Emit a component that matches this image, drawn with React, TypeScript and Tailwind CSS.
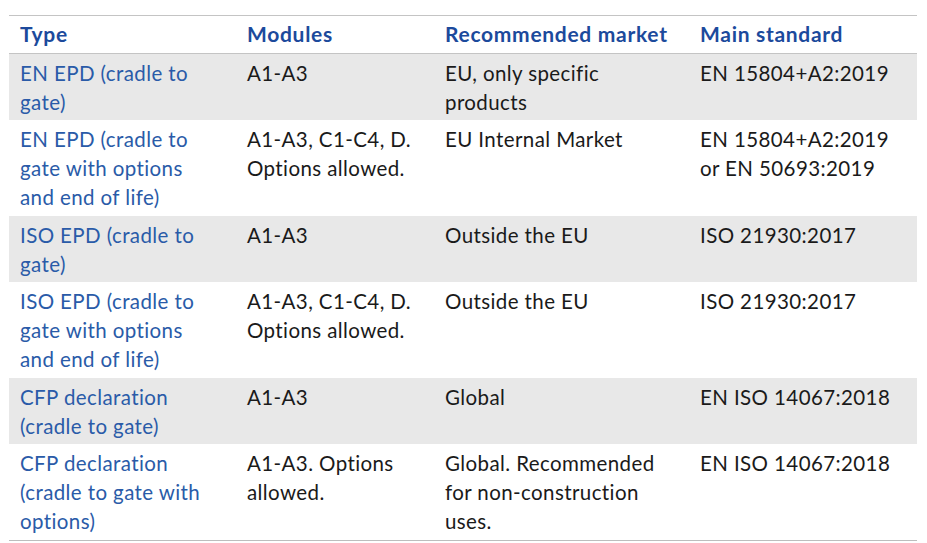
import React from "react";

type Row = { t: string[]; m: string[]; r: string[]; s: string[]; gray: boolean; h: string };

const rows: Row[] = [
  { t: ["EN EPD (cradle to", "gate)"], m: ["A1-A3"], r: ["EU, only specific", "products"], s: ["EN 15804+A2:2019"], gray: true, h: "h-[66px]" },
  { t: ["EN EPD (cradle to", "gate with options", "and end of life)"], m: ["A1-A3, C1-C4, D.", "Options allowed."], r: ["EU Internal Market"], s: ["EN 15804+A2:2019", "or EN 50693:2019"], gray: false, h: "h-[96px]" },
  { t: ["ISO EPD (cradle to", "gate)"], m: ["A1-A3"], r: ["Outside the EU"], s: ["ISO 21930:2017"], gray: true, h: "h-[66px]" },
  { t: ["ISO EPD (cradle to", "gate with options", "and end of life)"], m: ["A1-A3, C1-C4, D.", "Options allowed."], r: ["Outside the EU"], s: ["ISO 21930:2017"], gray: false, h: "h-[96px]" },
  { t: ["CFP declaration", "(cradle to gate)"], m: ["A1-A3"], r: ["Global"], s: ["EN ISO 14067:2018"], gray: true, h: "h-[66px]" },
  { t: ["CFP declaration", "(cradle to gate with", "options)"], m: ["A1-A3. Options", "allowed."], r: ["Global. Recommended", "for non-construction", "uses."], s: ["EN ISO 14067:2018"], gray: false, h: "h-[96px]" },
];

function Lines({ lines }: { lines: string[] }) {
  return (
    <>
      {lines.map((l, i) => (
        <div key={i} className="whitespace-nowrap">{l}</div>
      ))}
    </>
  );
}

export default function App() {
  return (
    <div className="w-[927px] h-[543px] bg-white overflow-hidden pt-[15px] pl-[9px]" style={{ fontFamily: "Lato, 'Liberation Sans', sans-serif" }}>
      <div className="w-[908px] border-b border-[#bdbdbd]">
        <div className="grid grid-cols-[228px_198px_255px_227px] h-[39px] border-t border-b border-[#c4c4c4] text-[21px] tracking-[0.7px] font-bold text-[#1c4a9c] leading-[29px] pt-[3px]">
          <div className="pl-[11px]">Type</div>
          <div className="pl-[10px]">Modules</div>
          <div className="pl-[10px]">Recommended market</div>
          <div className="pl-[10px]">Main standard</div>
        </div>
        {rows.map((row, i) => (
          <div key={i} className={`grid grid-cols-[228px_198px_255px_227px] ${row.h} ${row.gray ? "bg-[#e8e8e8]" : "bg-white"} text-[20.5px] tracking-[0.4px] leading-[29px] pt-[5px] text-[#1a1a1a]`}>
            <div className="pl-[11px] text-[#2a5ba8]"><Lines lines={row.t} /></div>
            <div className="pl-[10px]"><Lines lines={row.m} /></div>
            <div className="pl-[10px]"><Lines lines={row.r} /></div>
            <div className="pl-[10px]"><Lines lines={row.s} /></div>
          </div>
        ))}
      </div>
    </div>
  );
}
